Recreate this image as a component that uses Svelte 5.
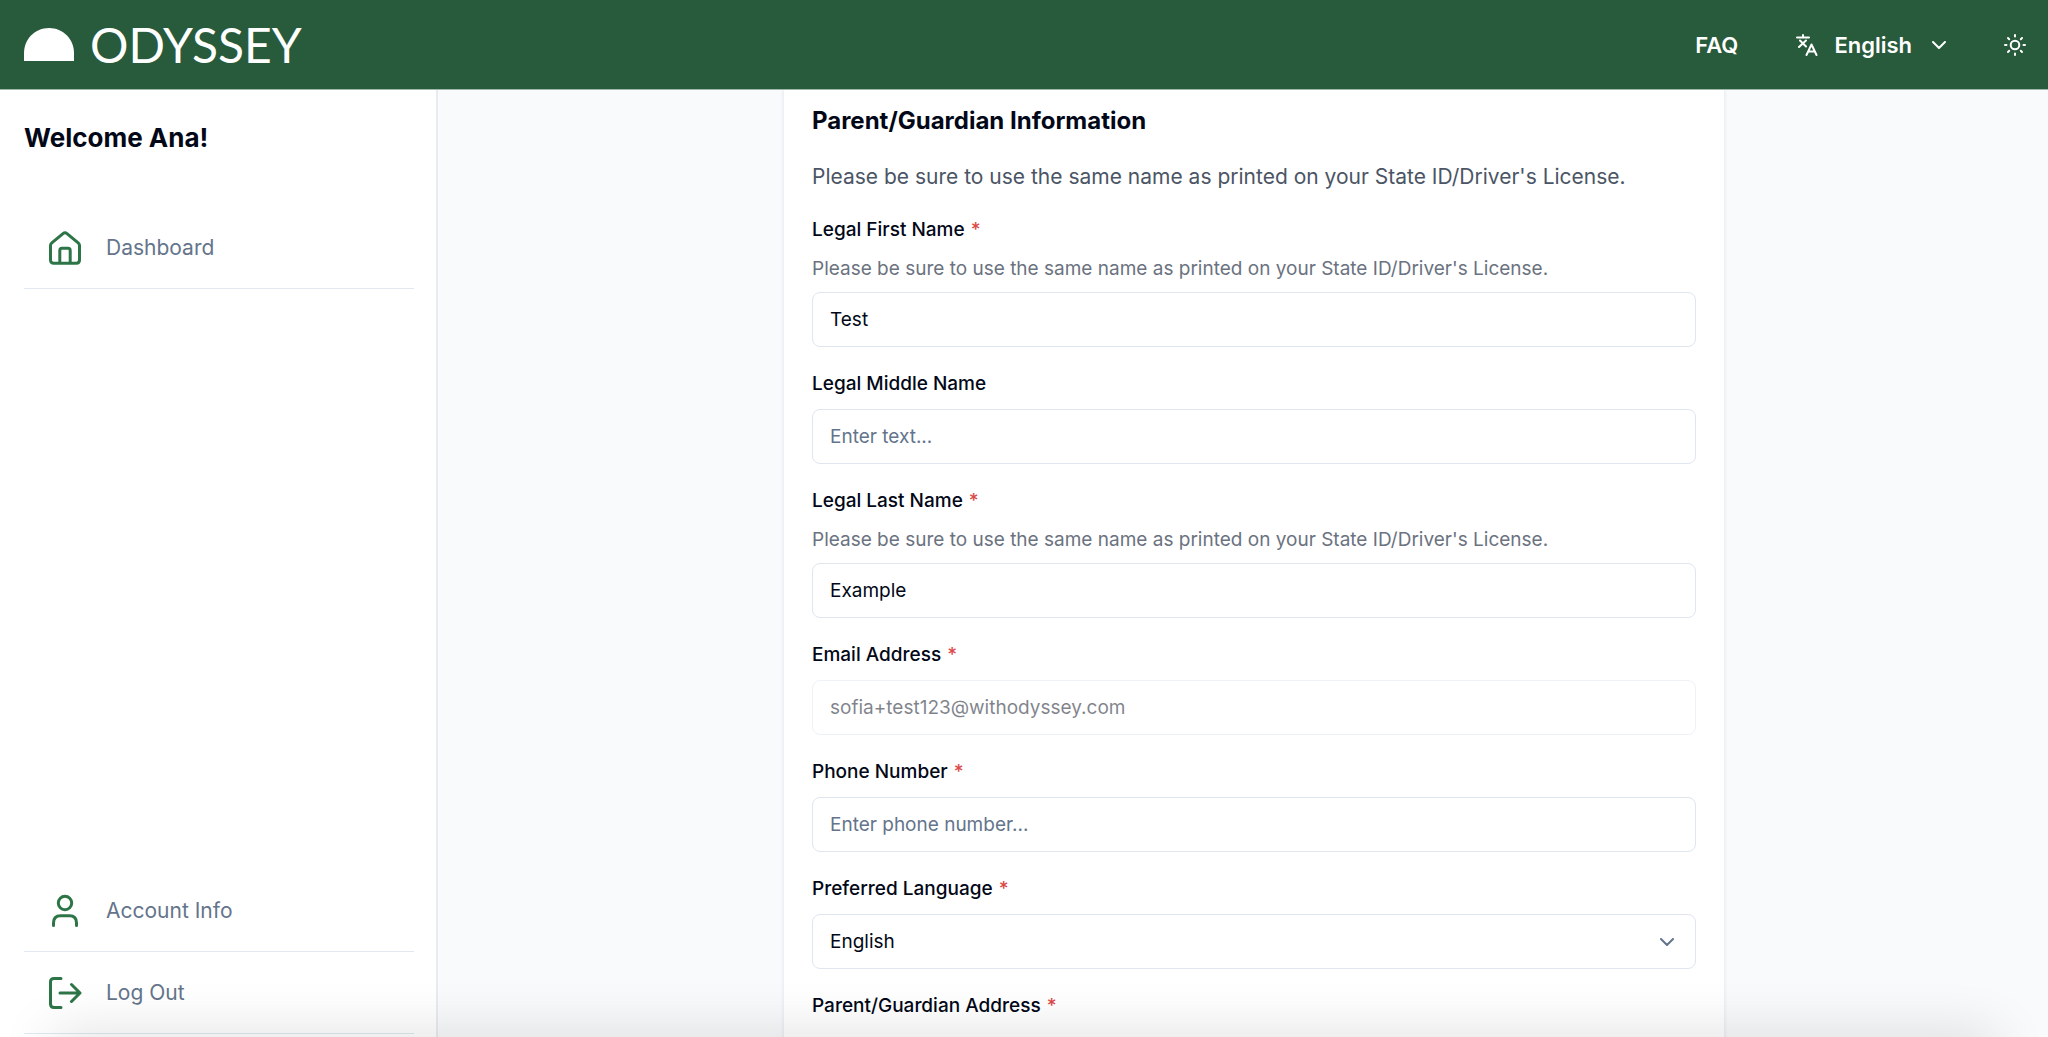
<script>
  const hint = "Please be sure to use the same name as printed on your State ID/Driver's License.";

  let fields = $state([
    { id: 'first-name', label: 'Legal First Name', required: true, hint, value: 'Test', type: 'text' },
    { id: 'middle-name', label: 'Legal Middle Name', value: '', placeholder: 'Enter text...', type: 'text' },
    { id: 'last-name', label: 'Legal Last Name', required: true, hint, value: 'Example', type: 'text' },
    { id: 'email', label: 'Email Address', required: true, value: 'sofia+test123@withodyssey.com', type: 'email', disabled: true },
    { id: 'phone', label: 'Phone Number', required: true, value: '', placeholder: 'Enter phone number...', type: 'tel' }
  ]);
  let language = $state('English');
</script>

{#snippet labelText(text, required)}
  {text}{#if required}<span class="required" aria-hidden="true">*</span>{/if}
{/snippet}

<div class="shell">
  <header class="topbar">
    <a class="brand" href="#home">
      <svg class="dome" viewBox="0 0 50 33" aria-hidden="true"><path d="M0 33V25C0 11 11 0 25 0s25 11 25 25v8z" /></svg>
      <span>ODYSSEY</span>
    </a>
    <nav class="tools" aria-label="Site">
      <a class="faq" href="#faq">FAQ</a>
      <button class="language" type="button">
        <svg class="small-icon" viewBox="0 0 22 22" aria-hidden="true">
          <path d="M1 3.500h12M7 1v2.500M4 6.500l6 6M10 6.500l-7 6.500M10.500 21l5-10.500 5 10.500M12.500 17.500h6" />
        </svg>
        <span>English</span>
        <svg class="chevron" viewBox="0 0 14 8" aria-hidden="true"><path d="M1 1l6 6 6-6" /></svg>
      </button>
      <button class="theme" type="button" aria-label="Toggle theme">
        <svg class="small-icon" viewBox="0 0 22 22" aria-hidden="true">
          <circle cx="11" cy="11" r="4.300" />
          <path d="M11 1v1.500M11 19.500V21M1 11h1.500M19.500 11H21M4 4l1.200 1.200M16.800 16.800L18 18M4 18l1.200-1.200M16.800 5.200L18 4" />
        </svg>
      </button>
    </nav>
  </header>

  <div class="body">
    <aside class="sidebar">
      <h1>Welcome Ana!</h1>
      <nav class="menu" aria-label="Account">
        <a href="#dashboard">
          <svg viewBox="0 0 34 34" aria-hidden="true">
            <path d="M2.500 14.500c0-1.200.5-2 1.300-2.700L15 2.600c1.200-1 2.800-1 4 0l11.200 9.200c.8.700 1.300 1.500 1.300 2.700V29c0 2-1.200 3.200-3.200 3.200H5.700c-2 0-3.200-1.200-3.200-3.200zM11.800 32V19.500c0-1.400.8-2.200 2.200-2.200h6c1.400 0 2.200.8 2.200 2.200V32" />
          </svg>
          <span>Dashboard</span>
        </a>
        <a class="account" href="#account">
          <svg viewBox="0 0 34 34" aria-hidden="true">
            <circle cx="17" cy="9" r="6.700" />
            <path d="M5.500 31.500v-2.500c0-4.500 2.500-7.200 7-7.200h9c4.500 0 7 2.700 7 7.200v2.500" />
          </svg>
          <span>Account Info</span>
        </a>
        <a href="#logout">
          <svg viewBox="0 0 34 34" aria-hidden="true">
            <path d="M13 2.500H6C3.700 2.500 2.500 3.700 2.500 6v22c0 2.300 1.200 3.500 3.500 3.500h7M12 17h19.500M23.500 8.500L32 17l-8.500 8.500" />
          </svg>
          <span>Log Out</span>
        </a>
      </nav>
    </aside>

    <main>
      <form class="card">
        <h2>Parent/Guardian Information</h2>
        <p class="intro">{hint}</p>
        {#each fields as field (field.id)}
          <div class="field">
            <label for={field.id}>{@render labelText(field.label, field.required)}</label>
            {#if field.hint}<p class="hint" id="{field.id}-hint">{field.hint}</p>{/if}
            <input
              id={field.id}
              type={field.type}
              placeholder={field.placeholder}
              disabled={field.disabled}
              required={field.required}
              aria-describedby={field.hint ? `${field.id}-hint` : undefined}
              bind:value={field.value}
            />
          </div>
        {/each}
        <div class="field">
          <label for="preferred-language">{@render labelText('Preferred Language', true)}</label>
          <div class="select-wrap">
            <select id="preferred-language" bind:value={language}>
              <option>English</option>
              <option>Español</option>
            </select>
            <svg class="chevron" viewBox="0 0 14 8" aria-hidden="true"><path d="M1 1l6 6 6-6" /></svg>
          </div>
        </div>
        <div class="field address">
          <label for="address">{@render labelText('Parent/Guardian Address', true)}</label>
          <input id="address" type="text" />
        </div>
      </form>
    </main>
  </div>
  <div class="footer-shade"></div>
</div>

<style>
  :global(body) {
    background: #f9fafc;
  }

  .shell,
  .shell :global(*) {
    box-sizing: border-box;
  }

  .shell {
    display: flex;
    flex-direction: column;
    height: 100vh;
    overflow: hidden;
    color: #020817;
    font-family: Inter, "Liberation Sans", sans-serif;
    font-size: 19px;
  }

  h1,
  h2,
  p {
    margin: 0;
  }

  a {
    color: inherit;
    text-decoration: none;
  }

  button {
    padding: 0;
    border: 0;
    background: none;
    color: inherit;
    font: inherit;
    cursor: pointer;
  }

  svg {
    flex: none;
    fill: none;
    stroke: currentColor;
    stroke-width: 2;
    stroke-linecap: round;
    stroke-linejoin: round;
  }

  .topbar {
    flex: none;
    display: flex;
    align-items: center;
    justify-content: space-between;
    height: 90px;
    padding: 0 22px 0 24px;
    border-bottom: 1px solid #9fb8a9;
    background: #285a3c;
    color: #fff;
  }

  .brand {
    display: flex;
    align-items: center;
    gap: 16px;
    font-family: Lato, "Liberation Sans", sans-serif;
    font-size: 48px;
    line-height: 56px;
  }

  .dome {
    width: 50px;
    height: 33px;
    fill: currentColor;
    stroke: none;
  }

  .tools,
  .language {
    display: flex;
    align-items: center;
  }

  .tools {
    gap: 58px;
    font-size: 22px;
    font-weight: 600;
  }

  .language span {
    margin: 0 20px 0 16px;
  }

  .small-icon {
    display: block;
    width: 22px;
    height: 22px;
  }

  .chevron {
    width: 14px;
    height: 8px;
  }

  .body {
    flex: 1;
    display: flex;
    min-height: 0;
  }

  .sidebar {
    flex: none;
    display: flex;
    flex-direction: column;
    width: 438px;
    padding: 30px 22px 3px 24px;
    border-right: 2px solid #e8ebf0;
    background: #fff;
  }

  h1 {
    font-size: 26px;
    line-height: 36px;
    font-weight: 700;
  }

  .menu {
    flex: 1;
    display: flex;
    flex-direction: column;
    padding-top: 51px;
  }

  .menu a {
    display: flex;
    align-items: center;
    gap: 24px;
    height: 82px;
    padding-left: 24px;
    border-bottom: 1px solid #e2e8f0;
    color: #64748b;
    font-size: 21px;
  }

  .menu .account {
    margin-top: auto;
  }

  .menu svg {
    width: 34px;
    height: 34px;
    color: #2d7547;
    stroke-width: 3;
  }

  main {
    flex: 1;
    min-width: 0;
    padding: 0 24px 0 46px;
    overflow: hidden;
  }

  .card {
    max-width: 942px;
    margin: 0 auto;
    padding: 13px 28px 40px;
    border: 1px solid #edf0f4;
    border-top: 0;
    background: #fff;
    box-shadow: 0 1px 3px rgb(15 23 42 / 8%);
  }

  h2 {
    font-size: 24px;
    line-height: 36px;
    font-weight: 700;
  }

  .intro {
    margin-top: 21px;
    color: #4b5565;
    font-size: 21px;
    line-height: 34px;
  }

  .field {
    margin-top: 24px;
  }

  .intro + .field {
    margin-top: 23px;
  }

  label {
    display: block;
    margin-bottom: 12px;
    font-weight: 500;
    line-height: 26px;
  }

  .address label {
    margin-bottom: 24px;
  }

  .required {
    margin-left: 6px;
    color: #dc4a4a;
  }

  .hint {
    margin-bottom: 9px;
    color: #6b7280;
    line-height: 28px;
  }

  input,
  select {
    display: block;
    width: 100%;
    height: 55px;
    padding: 0 17px;
    border: 1px solid #dfe6ef;
    border-radius: 8px;
    background: #fff;
    color: #020817;
    font: inherit;
    appearance: none;
  }

  input::placeholder {
    color: #64748b;
    opacity: 1;
  }

  input:disabled {
    opacity: 0.5;
  }

  .select-wrap {
    display: grid;
    align-items: center;
  }

  .select-wrap > :global(*) {
    grid-area: 1 / 1;
  }

  .select-wrap .chevron {
    justify-self: end;
    margin-right: 22px;
    color: #64748b;
    pointer-events: none;
  }

  .footer-shade {
    position: fixed;
    right: 60px;
    bottom: -20px;
    left: 60px;
    height: 10px;
    box-shadow: 0 0 56px 8px rgb(0 0 0 / 20%);
    pointer-events: none;
  }
</style>
